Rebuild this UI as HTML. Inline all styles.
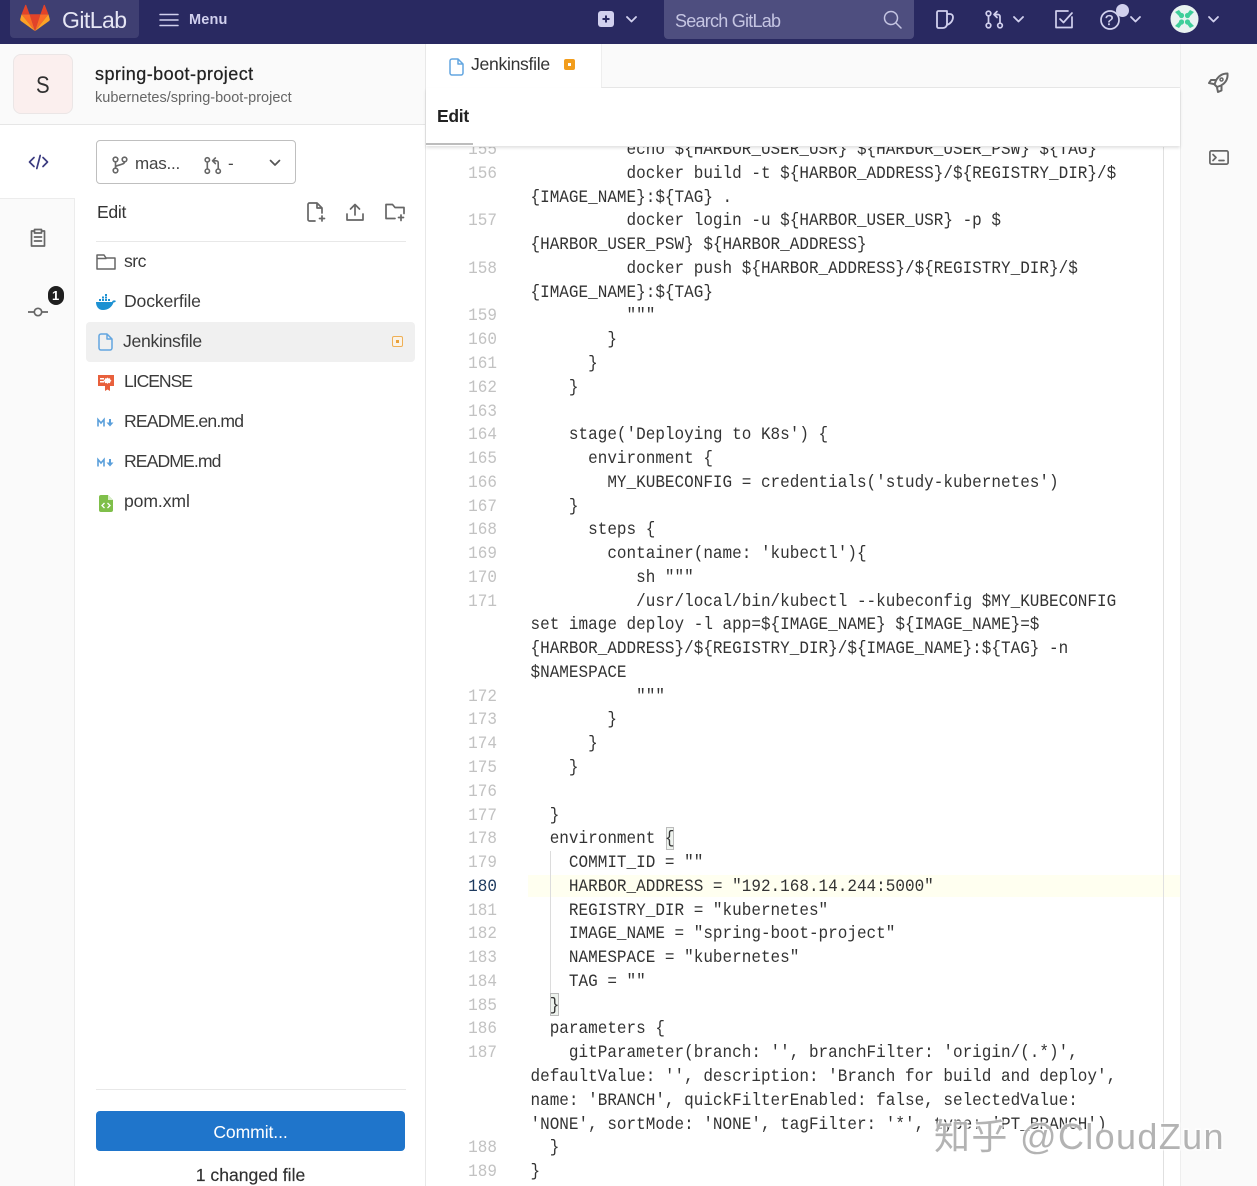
<!DOCTYPE html>
<html><head><meta charset="utf-8"><style>
html,body{margin:0;padding:0;background:#fff}
#p{position:relative;width:1257px;height:1186px;overflow:hidden;background:#fff;font-family:"Liberation Sans","Noto Sans CJK SC",sans-serif;color:#303030}
.a{position:absolute}
.t{position:absolute;white-space:nowrap;line-height:1}
svg{position:absolute;overflow:visible}
.st{fill:none;stroke-linecap:round;stroke-linejoin:round}
#ed{position:absolute;left:426px;top:147px;width:754px;height:1039px;overflow:hidden}
#rows{position:absolute;left:0;top:-7.9px;width:825px;font-family:"Liberation Mono",monospace;font-size:17.5px;color:#333;transform:scaleX(.9143);transform-origin:0 0}
.r{position:relative;height:23.77px;line-height:23.77px;white-space:pre;padding-left:114.3px}
.r b{position:absolute;left:0;width:77.6px;text-align:right;font-weight:400;color:#c2c2c2}
.f{position:absolute;left:124px;font-size:17.6px;color:#3a3a3a;white-space:nowrap;line-height:1;letter-spacing:-.25px}
</style></head><body><div id="p">

<!-- right sidebar / backgrounds -->
<div class="a" style="left:0;top:44px;width:425px;height:81px;background:#fafafa;border-bottom:1px solid #e6e6e6;box-sizing:border-box"></div>
<div class="a" style="left:0;top:198px;width:75px;height:988px;background:#fafafa;border-right:1px solid #ececec;border-top:1px solid #ececec;box-sizing:border-box"></div>
<div class="a" style="left:425px;top:44px;width:1px;height:1142px;background:#e8e8e8"></div>
<div class="a" style="left:601px;top:44px;width:579px;height:44px;background:#fafafa;border-bottom:1px solid #e8e8e8;border-left:1px solid #eee;box-sizing:border-box"></div>
<div class="a" style="left:1180px;top:44px;width:77px;height:1142px;background:#fafafa;border-left:1px solid #eee;box-sizing:border-box"></div>

<!-- editor -->
<div class="a" style="left:528px;top:875px;width:652px;height:22px;background:#fffff0"></div>
<div class="a" style="left:1163px;top:147px;width:1px;height:1039px;background:#e0e0e0"></div>
<div class="a" style="left:550px;top:851px;width:1px;height:142px;background:#dcdcdc"></div>
<div class="a" style="left:666px;top:827px;width:8px;height:23px;background:#eef3ee;border:1px solid #bbb;box-sizing:border-box"></div>
<div class="a" style="left:550px;top:993px;width:9px;height:23px;background:#eef3ee;border:1px solid #bbb;box-sizing:border-box"></div>
<div id="ed"><div id="rows">
<div class="r"><b>155</b>          echo ${HARBOR_USER_USR} ${HARBOR_USER_PSW} ${TAG}</div>
<div class="r"><b>156</b>          docker build -t ${HARBOR_ADDRESS}/${REGISTRY_DIR}/$</div>
<div class="r">{IMAGE_NAME}:${TAG} .</div>
<div class="r"><b>157</b>          docker login -u ${HARBOR_USER_USR} -p $</div>
<div class="r">{HARBOR_USER_PSW} ${HARBOR_ADDRESS}</div>
<div class="r"><b>158</b>          docker push ${HARBOR_ADDRESS}/${REGISTRY_DIR}/$</div>
<div class="r">{IMAGE_NAME}:${TAG}</div>
<div class="r"><b>159</b>          """</div>
<div class="r"><b>160</b>        }</div>
<div class="r"><b>161</b>      }</div>
<div class="r"><b>162</b>    }</div>
<div class="r"><b>163</b></div>
<div class="r"><b>164</b>    stage('Deploying to K8s') {</div>
<div class="r"><b>165</b>      environment {</div>
<div class="r"><b>166</b>        MY_KUBECONFIG = credentials('study-kubernetes')</div>
<div class="r"><b>167</b>    }</div>
<div class="r"><b>168</b>      steps {</div>
<div class="r"><b>169</b>        container(name: 'kubectl'){</div>
<div class="r"><b>170</b>           sh """</div>
<div class="r"><b>171</b>           /usr/local/bin/kubectl --kubeconfig $MY_KUBECONFIG</div>
<div class="r">set image deploy -l app=${IMAGE_NAME} ${IMAGE_NAME}=$</div>
<div class="r">{HARBOR_ADDRESS}/${REGISTRY_DIR}/${IMAGE_NAME}:${TAG} -n</div>
<div class="r">$NAMESPACE</div>
<div class="r"><b>172</b>           """</div>
<div class="r"><b>173</b>        }</div>
<div class="r"><b>174</b>      }</div>
<div class="r"><b>175</b>    }</div>
<div class="r"><b>176</b></div>
<div class="r"><b>177</b>  }</div>
<div class="r"><b>178</b>  environment {</div>
<div class="r"><b>179</b>    COMMIT_ID = ""</div>
<div class="r"><b style="color:#1d3a5f">180</b>    HARBOR_ADDRESS = "192.168.14.244:5000"</div>
<div class="r"><b>181</b>    REGISTRY_DIR = "kubernetes"</div>
<div class="r"><b>182</b>    IMAGE_NAME = "spring-boot-project"</div>
<div class="r"><b>183</b>    NAMESPACE = "kubernetes"</div>
<div class="r"><b>184</b>    TAG = ""</div>
<div class="r"><b>185</b>  }</div>
<div class="r"><b>186</b>  parameters {</div>
<div class="r"><b>187</b>    gitParameter(branch: '', branchFilter: 'origin/(.*)',</div>
<div class="r">defaultValue: '', description: 'Branch for build and deploy',</div>
<div class="r">name: 'BRANCH', quickFilterEnabled: false, selectedValue:</div>
<div class="r">'NONE', sortMode: 'NONE', tagFilter: '*', type: 'PT_BRANCH')</div>
<div class="r"><b>188</b>  }</div>
<div class="r"><b>189</b>}</div>
</div></div>

<!-- tab + edit header -->
<div class="a" style="left:426px;top:88px;width:754px;height:58px;background:#fff;box-shadow:0 2px 3px rgba(0,0,0,.12)"></div>
<div class="a" style="left:426px;top:143px;width:47px;height:2px;background:#bdbdbd"></div>
<svg style="left:449px;top:58px" width="15" height="18" viewBox="0 0 15 18"><path class="st" stroke="#63a6e0" stroke-width="1.5" d="M1 3a2 2 0 0 1 2-2h6l5 5v9a2 2 0 0 1-2 2H3a2 2 0 0 1-2-2zM9 1v5h5"/></svg>
<div class="t" style="left:471px;top:56px;font-size:17.6px;color:#333;letter-spacing:-.3px">Jenkinsfile</div>
<div class="a" style="left:564px;top:59px;width:11px;height:11px;background:#f29d1c;border-radius:2px"></div>
<div class="a" style="left:568px;top:63px;width:3px;height:3px;background:#fff"></div>
<div class="t" style="left:437px;top:108px;font-size:17.5px;font-weight:700;color:#222;letter-spacing:-.3px">Edit</div>

<!-- nav -->
<div class="a" style="left:0;top:0;width:1257px;height:44px;background:#292961"></div>
<div class="a" style="left:10px;top:0;width:129px;height:38px;background:#3f3f72;border-radius:0 0 4px 4px"></div>
<svg style="left:20px;top:4px" width="30" height="28" viewBox="0 0 32 30">
<path fill="#e24329" d="M16 29 10.2 11h11.6z"/><path fill="#fc6d26" d="M16 29 1.6 11h8.6z"/><path fill="#fca326" d="M1.6 11 .2 16.200c-.2.8.1 1.500.7 2L16 29z"/><path fill="#e24329" d="M1.600 11h8.600L6.600 1.200c-.2-.5-.9-.5-1.100 0z"/><path fill="#fc6d26" d="M16 29 30.400 11h-8.600z"/><path fill="#fca326" d="M30.400 11l1.400 5.200c.2.8-.1 1.500-.7 2L16 29z"/><path fill="#e24329" d="M30.400 11h-8.600l3.600-9.800c.2-.5.9-.5 1.100 0z"/></svg>
<div class="t" style="left:62px;top:9px;font-size:23px;color:#e6e6f4;letter-spacing:-.55px">GitLab</div>
<svg style="left:159px;top:13px" width="20" height="14" viewBox="0 0 20 14"><path class="st" stroke="#d1d0ee" stroke-width="1.500" d="M1 1.500h18M1 7h18M1 12.500h18"/></svg>
<div class="t" style="left:189px;top:13px;font-size:14.500px;font-weight:700;color:#d1d0ee;letter-spacing:.15px">Menu</div>
<div class="a" style="left:598px;top:11px;width:16px;height:16px;background:#d1d0ee;border-radius:3px"></div>
<svg style="left:598px;top:11px" width="16" height="16"><path d="M8 4.500v7M4.500 8h7" stroke="#292961" stroke-width="2"/></svg>
<svg style="left:626px;top:16px" width="11" height="7"><path class="st" stroke="#d1d0ee" stroke-width="1.800" d="M1 1l4.500 4.500L10 1"/></svg>
<div class="a" style="left:664px;top:0;width:250px;height:39px;background:#4e4e7f;border-radius:0 0 4px 4px"></div>
<div class="t" style="left:675px;top:12px;font-size:18px;color:#c5c5e2;letter-spacing:-.75px">Search GitLab</div>
<svg style="left:883px;top:10px" width="19" height="19" viewBox="0 0 19 19"><circle cx="8" cy="8" r="6.500" fill="none" stroke="#c5c5e2" stroke-width="1.500"/><path class="st" stroke="#c5c5e2" stroke-width="1.500" d="M13 13l5 5"/></svg>
<svg style="left:936px;top:10px" width="19" height="19" viewBox="0 0 19 19"><path class="st" stroke="#d1d0ee" stroke-width="1.800" d="M1 2.500a1.500 1.500 0 0 1 1.500-1.500H11v13a4 4 0 0 1-4 4H2.500A1.500 1.500 0 0 1 1 16.500zM11 4h3a3 3 0 0 1 3 3c0 4-3 7-6 8"/></svg>
<svg style="left:985px;top:10px" width="19" height="19" viewBox="0 0 19 19"><g class="st" stroke="#d1d0ee" stroke-width="1.700"><circle cx="3.500" cy="3.500" r="2.300"/><circle cx="3.500" cy="15.500" r="2.300"/><circle cx="15" cy="15.500" r="2.300"/><path d="M3.500 6v7M15 13V6.500a2 2 0 0 0-2-2h-3M12 1.500l-3 3 3 3"/></g></svg>
<svg style="left:1013px;top:16px" width="11" height="7"><path class="st" stroke="#d1d0ee" stroke-width="1.800" d="M1 1l4.500 4.500L10 1"/></svg>
<svg style="left:1055px;top:10px" width="19" height="19" viewBox="0 0 19 19"><path class="st" stroke="#d1d0ee" stroke-width="1.700" d="M17 7v10.500H1V1h12M5 9l3.500 3.500L17 3"/></svg>
<svg style="left:1100px;top:9px" width="20" height="21" viewBox="0 0 20 21"><circle cx="10" cy="11" r="9" fill="none" stroke="#d1d0ee" stroke-width="1.700"/></svg>
<div class="t" style="left:1105px;top:13px;font-size:15px;color:#d1d0ee;-webkit-text-stroke:.3px #d1d0ee">?</div>
<div class="a" style="left:1116px;top:4px;width:13px;height:13px;border-radius:50%;background:#d1d0ee"></div>
<svg style="left:1130px;top:16px" width="11" height="7"><path class="st" stroke="#d1d0ee" stroke-width="1.800" d="M1 1l4.500 4.500L10 1"/></svg>
<svg style="left:1170px;top:5px" width="29" height="28" viewBox="0 0 29 28"><circle cx="14.500" cy="14" r="14" fill="#e9f3f1"/><g fill="#3ecf9a"><path d="M5 7l4-2 3 4-3 2zM24 7l-4-2-3 4 3 2zM5 21l4 2 3-4-3-2zM24 21l-4 2-3-4 3-2z"/><circle cx="11.500" cy="10.500" r="2.600"/><circle cx="17.500" cy="10.500" r="2.600"/><circle cx="11.500" cy="17" r="2.600"/><circle cx="17.500" cy="17" r="2.600"/></g></svg>
<svg style="left:1208px;top:16px" width="11" height="7"><path class="st" stroke="#d1d0ee" stroke-width="1.800" d="M1 1l4.500 4.500L10 1"/></svg>

<!-- project head -->
<div class="a" style="left:13px;top:54px;width:60px;height:60px;box-sizing:border-box;background:#fbefee;border:1px solid #ebe6e6;border-radius:8px"></div>
<div class="t" style="left:36px;top:74px;font-size:24px;color:#303030;transform:scaleX(.85);transform-origin:left">S</div>
<div class="t" style="left:95px;top:65px;font-size:18px;color:#222;-webkit-text-stroke:.25px #222;letter-spacing:.45px">spring-boot-project</div>
<div class="t" style="left:95px;top:91px;font-size:14.500px;color:#666">kubernetes/spring-boot-project</div>

<!-- activity bar -->
<svg style="left:28px;top:154px" width="21" height="16" viewBox="0 0 21 16"><path class="st" stroke="#3b3b80" stroke-width="1.700" d="M6 3.500 1.500 8 6 12.500M15 3.500 19.500 8 15 12.500M12.200 1.500 8.800 14.500"/></svg>
<svg style="left:30px;top:228px" width="16" height="19" viewBox="0 0 16 19"><path class="st" stroke="#666" stroke-width="1.700" d="M4.500 3H1.500v15h13V3h-3M4.500 1.500h7v3.500h-7zM4.500 9h7M4.500 13h7"/></svg>
<svg style="left:28px;top:305px" width="20" height="14" viewBox="0 0 20 14"><circle cx="10" cy="7" r="3.700" fill="none" stroke="#666" stroke-width="1.700"/><path stroke="#666" stroke-width="1.700" d="M0 7h6M14 7h6"/></svg>
<div class="a" style="left:48px;top:286px;width:16px;height:19px;border-radius:8px;background:#1f1f1f"></div>
<div class="t" style="left:52px;top:289px;font-size:13px;font-weight:700;color:#fff">1</div>

<!-- ref dropdown -->
<div class="a" style="left:96px;top:140px;width:200px;height:44px;box-sizing:border-box;background:#fff;border:1px solid #bfbfbf;border-radius:4px"></div>
<svg style="left:112px;top:156px" width="16" height="18" viewBox="0 0 16 18"><g class="st" stroke="#666" stroke-width="1.600"><circle cx="3.500" cy="14.500" r="2.300"/><circle cx="3.500" cy="3.500" r="2.300"/><circle cx="12.500" cy="3.500" r="2.300"/><path d="M3.500 6v6M12.500 6c0 3-9 3-9 5"/></g></svg>
<div class="t" style="left:135px;top:155px;font-size:17px;color:#444;letter-spacing:-.2px">mas...</div>
<svg style="left:204px;top:156px" width="18" height="19" viewBox="0 0 19 19"><g class="st" stroke="#666" stroke-width="1.700"><circle cx="3.500" cy="3.500" r="2.300"/><circle cx="3.500" cy="15.500" r="2.300"/><circle cx="15" cy="15.500" r="2.300"/><path d="M3.500 6v7M15 13V6.500a2 2 0 0 0-2-2h-3M12 1.500l-3 3 3 3"/></g></svg>
<div class="t" style="left:228px;top:155px;font-size:17px;color:#444">-</div>
<svg style="left:269px;top:159px" width="12" height="8"><path class="st" stroke="#555" stroke-width="1.700" d="M1.500 1.500 6 6l4.500-4.500"/></svg>

<div class="t" style="left:97px;top:204px;font-size:17.600px;color:#333;letter-spacing:-.3px">Edit</div>
<svg style="left:307px;top:202px" width="19" height="20" viewBox="0 0 19 20"><path class="st" stroke="#666" stroke-width="1.700" d="M8 19H2.500A1.500 1.500 0 0 1 1 17.500v-15A1.500 1.500 0 0 1 2.500 1H10l5 5v5M10 1v5h5M15 14v5M12.500 16.500h5"/></svg>
<svg style="left:346px;top:203px" width="18" height="18" viewBox="0 0 18 18"><path class="st" stroke="#666" stroke-width="1.700" d="M9 12V1.500M4.500 6 9 1.500 13.500 6M1 11v6h16v-6"/></svg>
<svg style="left:385px;top:203px" width="20" height="18" viewBox="0 0 20 18"><path class="st" stroke="#666" stroke-width="1.700" d="M10 15.500H1V1.500h6.500L10 4.500h9v6M16 12v5.500M13.500 14.500h5"/></svg>
<div class="a" style="left:96px;top:241px;width:310px;height:1px;background:#e8e8e8"></div>

<!-- files -->
<div class="a" style="left:86px;top:322px;width:329px;height:40px;background:#f0f0f0;border-radius:4px"></div>
<svg style="left:96px;top:254px" width="20" height="16" viewBox="0 0 20 16"><path class="st" stroke="#666" stroke-width="1.500" d="M1 1h7l2 3h9v11H1zM1 4.500h9"/></svg>
<div class="f" style="top:253px;letter-spacing:-.5px">src</div>
<svg style="left:96px;top:294px" width="20" height="16" viewBox="0 0 20 16"><path fill="#1d91d2" d="M0 8h16c.5-1.500 1.500-2 3-1.500L20 7c-.5 1-1.500 1.500-2.500 1.500C16 13 12 16 7 16 2 16 0 12 0 8z"/><path fill="#1d91d2" d="M3 5h2v2H3zM6 5h2v2H6zM9 5h2v2H9zM6 2.500h2v2H6zM9 2.500h2v2H9zM9 0h2v2H9zM12 5h2v2h-2z"/></svg>
<div class="f" style="top:293px;letter-spacing:-.15px">Dockerfile</div>
<svg style="left:98px;top:333px" width="15" height="18" viewBox="0 0 15 18"><path class="st" stroke="#63a6e0" stroke-width="1.500" d="M1 3a2 2 0 0 1 2-2h6l5 5v9a2 2 0 0 1-2 2H3a2 2 0 0 1-2-2zM9 1v5h5"/></svg>
<div class="f" style="top:333px;left:123px;letter-spacing:-.3px">Jenkinsfile</div>
<div class="a" style="left:392px;top:336px;width:11px;height:11px;box-sizing:border-box;border:1.500px solid #efaf55;border-radius:2px;background:#faf3e8"></div>
<div class="a" style="left:396px;top:340px;width:3px;height:3px;background:#e9a13c"></div>
<svg style="left:97px;top:374px" width="18" height="18" viewBox="0 0 18 18"><path fill="#e8603c" d="M1 1h16v11h-4v5l-2.500-1.500L8 17v-5H1z"/><path fill="#fff" d="M3 4h4v1.500H3zM3 7h4v1.500H3zM10.500 3.500l1 1 1.500-.3.300 1.500 1.200 1-1.200 1-.3 1.500-1.500-.3-1 1-1-1-1.500.3-.3-1.500-1.200-1 1.200-1 .3-1.500 1.500.3z"/></svg>
<div class="f" style="top:373px;letter-spacing:-1.050px">LICENSE</div>
<svg style="left:97px;top:418px" width="17" height="9" viewBox="0 0 17 9"><path fill="none" stroke="#5a9fdb" stroke-width="1.600" d="M1 8.500V1.500l3 3.500 3-3.500v7"/><path fill="#5a9fdb" d="M12 1h2v3.500h2.500L13 8.500 9.500 4.500H12z"/></svg>
<div class="f" style="top:413px;letter-spacing:-.82px">README.en.md</div>
<svg style="left:97px;top:458px" width="17" height="9" viewBox="0 0 17 9"><path fill="none" stroke="#5a9fdb" stroke-width="1.600" d="M1 8.500V1.500l3 3.500 3-3.500v7"/><path fill="#5a9fdb" d="M12 1h2v3.500h2.500L13 8.500 9.500 4.500H12z"/></svg>
<div class="f" style="top:453px;letter-spacing:-.9px">README.md</div>
<svg style="left:99px;top:495px" width="14" height="17" viewBox="0 0 14 17"><path fill="#7fbf4a" d="M2 0h7l5 5v10a2 2 0 0 1-2 2H2a2 2 0 0 1-2-2V2a2 2 0 0 1 2-2z"/><path fill="none" stroke="#fff" stroke-width="1.300" d="M5.500 8 3 10.500 5.500 13M8.500 8 11 10.500 8.500 13"/><path fill="#d9eec9" d="M9 0l5 5H9z"/></svg>
<div class="f" style="top:493px;letter-spacing:-.1px">pom.xml</div>

<!-- commit -->
<div class="a" style="left:96px;top:1089px;width:310px;height:1px;background:#e8e8e8"></div>
<div class="a" style="left:96px;top:1111px;width:309px;height:40px;background:#1f75cb;border-radius:4px"></div>
<div class="t" style="left:96px;width:309px;text-align:center;top:1124px;font-size:17.600px;color:#fff;letter-spacing:-.1px">Commit...</div>
<div class="t" style="left:96px;width:309px;text-align:center;top:1167px;font-size:17.600px;color:#303030;letter-spacing:0;-webkit-text-stroke:.15px #303030">1 changed file</div>

<!-- right sidebar icons -->
<svg style="left:1208px;top:72px" width="21" height="21" viewBox="0 0 21 21"><path class="st" stroke="#666" stroke-width="2" d="M19.500 1.500c-5 0-9 2.500-11.500 7l-1.500 4 2.500 2.500 4-1.500c4.500-2.500 7-6.500 6.500-12zM7.500 8H3L1 11l4.500 1M13.500 14v4.500L10 20l-1-4.500"/><circle cx="13.500" cy="7.500" r="1.500" fill="none" stroke="#666" stroke-width="1.500"/></svg>
<svg style="left:1209px;top:150px" width="20" height="15" viewBox="0 0 20 15"><rect x=".9" y=".9" width="18.200" height="13.200" rx="1.500" fill="none" stroke="#666" stroke-width="1.700"/><path class="st" stroke="#666" stroke-width="1.700" d="M4 4.500l3 3-3 3M10 10.500h5"/></svg>

<!-- watermark -->
<div class="t" style="left:934px;top:1119px;font-family:'Liberation Sans','Noto Sans CJK SC',sans-serif;font-size:36px;color:rgba(175,175,175,.95);letter-spacing:1.350px;-webkit-text-stroke:3px rgba(255,255,255,.65);paint-order:stroke fill">知乎 @CloudZun</div>

</div></body></html>
